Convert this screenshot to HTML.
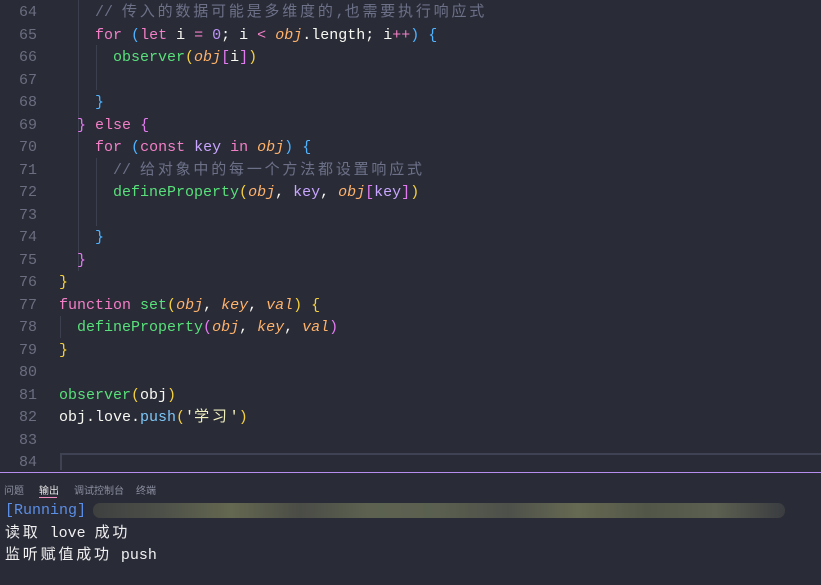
<!DOCTYPE html>
<html><head><meta charset="utf-8"><style>
body{margin:0;width:821px;height:584px;overflow:hidden;background:#292b37;font-family:"Liberation Mono","Noto Sans CJK SC",monospace;}
.ed{position:absolute;left:0;top:0;width:821px;height:472px;}
.l{position:absolute;left:0;height:22.5px;line-height:22.5px;font-size:15px;white-space:pre;color:#f8f8f2;}
.n{position:absolute;left:0;width:37px;text-align:right;color:#6b6e80;font-family:"Liberation Mono",monospace;}
.c{position:absolute;left:59px;}
.k{color:#f27fc6}.f{color:#58e07a}.p{color:#ffb26a;font-style:italic}.y{color:#f4d03f}.v{color:#e27af0}.b{color:#4fb3ff}.cm{color:#6d7188}.num{color:#bd93f9}.kv{color:#c9a6ff}.pu{color:#7cc6f7}
.cj{letter-spacing:2.8px}
.g{position:absolute;width:1px;background:#3c3f4e;}
.panel{position:absolute;left:0;top:472px;width:821px;height:112px;border-top:1.5px solid #b78ef0;}
.tab{position:absolute;top:9px;font-size:10px;color:#8c8fa0;font-family:"Liberation Sans","Noto Sans CJK SC",sans-serif;}
.o{position:absolute;left:5px;font-size:15px;color:#f0f0f0;white-space:pre;}
</style></head><body>
<div class="ed">
<div class="g" style="left:78px;top:0;height:271px"></div>
<div class="g" style="left:96px;top:45px;height:45px"></div>
<div class="g" style="left:96px;top:158px;height:68px"></div>
<div class="g" style="left:60px;top:316px;height:22px"></div>
<div style="position:absolute;left:60px;top:453px;width:761px;height:17px;border-top:2px solid #3f4252;border-left:2px solid #3f4252;box-sizing:border-box"></div>
<div style="position:absolute;left:0;top:2px;width:821px">
<div class="l" style="top:0px"><span class="n">64</span><span class="c">    <span class="cm">// <span class="cj">传入的数据可能是多维度的</span>,<span class="cj">也需要执行响应式</span></span></span></div>
<div class="l" style="top:22.5px"><span class="n">65</span><span class="c">    <span class="k">for</span> <span class="b">(</span><span class="k">let</span> i <span class="k">=</span> <span class="num">0</span>; i <span class="k">&lt;</span> <span class="p">obj</span>.length; i<span class="k">++</span><span class="b">)</span> <span class="b">{</span></span></div>
<div class="l" style="top:45px"><span class="n">66</span><span class="c">      <span class="f">observer</span><span class="y">(</span><span class="p">obj</span><span class="v">[</span>i<span class="v">]</span><span class="y">)</span></span></div>
<div class="l" style="top:67.5px"><span class="n">67</span></div>
<div class="l" style="top:90px"><span class="n">68</span><span class="c">    <span class="b">}</span></span></div>
<div class="l" style="top:112.5px"><span class="n">69</span><span class="c">  <span class="v">}</span> <span class="k">else</span> <span class="v">{</span></span></div>
<div class="l" style="top:135px"><span class="n">70</span><span class="c">    <span class="k">for</span> <span class="b">(</span><span class="k">const</span> <span class="kv">key</span> <span class="k">in</span> <span class="p">obj</span><span class="b">)</span> <span class="b">{</span></span></div>
<div class="l" style="top:157.5px"><span class="n">71</span><span class="c">      <span class="cm">// <span class="cj">给对象中的每一个方法都设置响应式</span></span></span></div>
<div class="l" style="top:180px"><span class="n">72</span><span class="c">      <span class="f">defineProperty</span><span class="y">(</span><span class="p">obj</span>, <span class="kv">key</span>, <span class="p">obj</span><span class="v">[</span><span class="kv">key</span><span class="v">]</span><span class="y">)</span></span></div>
<div class="l" style="top:202.5px"><span class="n">73</span></div>
<div class="l" style="top:225px"><span class="n">74</span><span class="c">    <span class="b">}</span></span></div>
<div class="l" style="top:247.5px"><span class="n">75</span><span class="c">  <span class="v">}</span></span></div>
<div class="l" style="top:270px"><span class="n">76</span><span class="c"><span class="y">}</span></span></div>
<div class="l" style="top:292.5px"><span class="n">77</span><span class="c"><span class="k">function</span> <span class="f">set</span><span class="y">(</span><span class="p">obj</span>, <span class="p">key</span>, <span class="p">val</span><span class="y">)</span> <span class="y">{</span></span></div>
<div class="l" style="top:315px"><span class="n">78</span><span class="c">  <span class="f">defineProperty</span><span class="v">(</span><span class="p">obj</span>, <span class="p">key</span>, <span class="p">val</span><span class="v">)</span></span></div>
<div class="l" style="top:337.5px"><span class="n">79</span><span class="c"><span class="y">}</span></span></div>
<div class="l" style="top:360px"><span class="n">80</span></div>
<div class="l" style="top:382.5px"><span class="n">81</span><span class="c"><span class="f">observer</span><span class="y">(</span>obj<span class="y">)</span></span></div>
<div class="l" style="top:405px"><span class="n">82</span><span class="c">obj.love.<span class="pu">push</span><span class="y">(</span><span style="color:#f1f1c0">'<span class="cj">学习</span>'</span><span class="y">)</span></span></div>
<div class="l" style="top:427.5px"><span class="n">83</span></div>
<div class="l" style="top:450px"><span class="n">84</span></div>
</div>
</div>
<div class="panel">
<span class="tab" style="left:4px">问题</span>
<span class="tab" style="left:39px;color:#e8e8e8">输出</span>
<div style="position:absolute;left:39px;top:24px;width:18px;height:1px;background:#f08fc0"></div>
<span class="tab" style="left:74px">调试控制台</span>
<span class="tab" style="left:136px">终端</span>
<div class="o" style="top:29px;color:#5b8ee6">[Running]</div>
<div style="position:absolute;left:93px;top:30px;width:692px;height:15px;border-radius:7px;background:linear-gradient(90deg,#3e4040,#4d5048 10%,#646850 20%,#4a4c46 30%,#5d6250 40%,#5a5f4f 50%,#4d5049 60%,#666a52 70%,#525648 80%,#5c6050 90%,#3a3c40)"></div>
<div class="o" style="top:48px"><span class="cj">读取</span> love <span class="cj">成功</span></div>
<div class="o" style="top:70px"><span class="cj">监听赋值成功</span> push</div>
</div>
</body></html>
